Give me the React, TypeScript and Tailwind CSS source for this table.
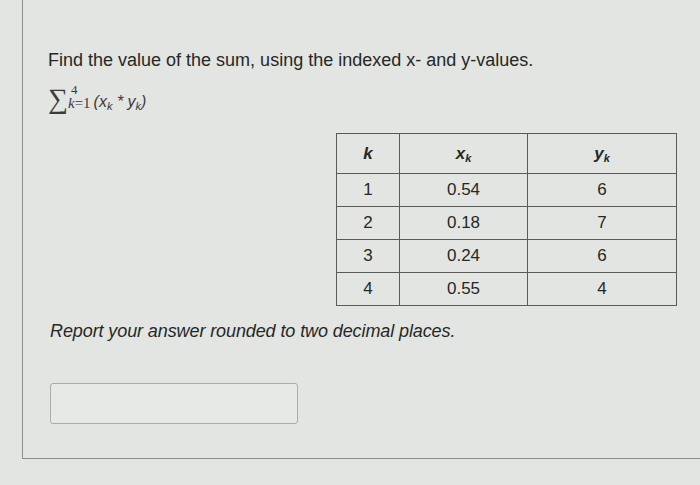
export default function App() {
  const rows = [
    { k: 1, x: "0.54", y: "6" },
    { k: 2, x: "0.18", y: "7" },
    { k: 3, x: "0.24", y: "6" },
    { k: 4, x: "0.55", y: "4" },
  ];

  return (
    <div className="w-[700px] h-[485px] bg-[#e2e5e1] overflow-hidden font-['Liberation_Sans',Arial,sans-serif] text-[#262826]">
      <div className="ml-[22px] h-[459px] border-l border-b border-[#8d908c] pl-[25px] pt-[49px]">
        <p className="text-[18px] leading-[22px]">
          Find the value of the sum, using the indexed x- and y-values.
        </p>

        {/* sum expression */}
        <div className="mt-[10px] flex items-end h-[30px] text-[#3a3c3a]">
          <span className="font-['Liberation_Serif',serif] text-[28px] leading-[24px]">∑</span>
          <span className="flex flex-col font-['Liberation_Serif',serif] leading-none">
            <span className="text-[13px] leading-[12px] ml-[3px]">4</span>
            <span className="text-[15px] leading-[15px]"><i>k</i>=1</span>
          </span>
          <span className="ml-[3px] text-[16px] italic leading-[18px]">
            (x<sub className="text-[11px]">k</sub> * y<sub className="text-[11px]">k</sub>)
          </span>
        </div>

        <div className="flex justify-end mr-[23px] mt-[22px]">
          <table className="border-collapse border border-[#5a5c5a] text-[17px] text-center">
            <thead>
              <tr className="h-[40px]">
                <th className="w-[63px] border border-[#5a5c5a] italic font-bold text-[17px]">k</th>
                <th className="w-[128px] border border-[#5a5c5a] italic font-bold text-[17px]">
                  x<sub className="text-[11px]">k</sub>
                </th>
                <th className="w-[149px] border border-[#5a5c5a] italic font-bold text-[17px]">
                  y<sub className="text-[11px]">k</sub>
                </th>
              </tr>
            </thead>
            <tbody>
              {rows.map((r) => (
                <tr key={r.k} className="h-[33px]">
                  <td className="border border-[#5a5c5a]">{r.k}</td>
                  <td className="border border-[#5a5c5a]">{r.x}</td>
                  <td className="border border-[#5a5c5a]">{r.y}</td>
                </tr>
              ))}
            </tbody>
          </table>
        </div>

        <p className="mt-[14px] ml-[2px] text-[18px] leading-[22px] italic tracking-[-0.1px]">
          Report your answer rounded to two decimal places.
        </p>

        <div className="mt-[41px] ml-[2px] w-[248px] h-[41px] rounded-[3px] border border-[#a9aca8] bg-[#e6e9e5]" />
      </div>
    </div>
  );
}
